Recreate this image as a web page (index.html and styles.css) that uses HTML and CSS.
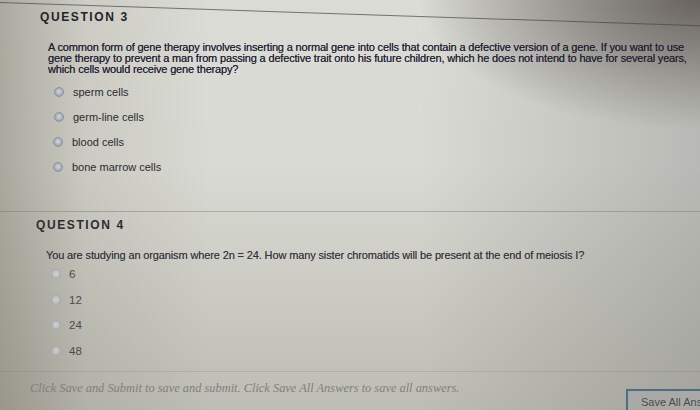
FILE: index.html
```html
<!DOCTYPE html>
<html>
<head>
<meta charset="utf-8">
<link rel="stylesheet" href="styles.css">
</head>
<body>
<div class="screen">
  <div class="topline"></div>
  <section class="q q3">
    <h2 class="qtitle">QUESTION 3</h2>
    <p class="qtext">A common form of gene therapy involves inserting a normal gene into cells that contain a defective version of a gene. If you want to use<br>gene therapy to prevent a man from passing a defective trait onto his future children, which he does not intend to have for several years,<br>which cells would receive gene therapy?</p>
    <ul class="opts">
      <li class="opt"><span class="radio"></span><span>sperm cells</span></li>
      <li class="opt"><span class="radio"></span><span>germ-line cells</span></li>
      <li class="opt"><span class="radio"></span><span>blood cells</span></li>
      <li class="opt"><span class="radio"></span><span>bone marrow cells</span></li>
    </ul>
  </section>
  <div class="divider"></div>
  <section class="q q4">
    <h2 class="qtitle">QUESTION 4</h2>
    <p class="qtext">You are studying an organism where 2n = 24. How many sister chromatids will be present at the end of meiosis I?</p>
    <ul class="opts">
      <li class="opt"><span class="radio"></span><span>6</span></li>
      <li class="opt"><span class="radio"></span><span>12</span></li>
      <li class="opt"><span class="radio"></span><span>24</span></li>
      <li class="opt"><span class="radio"></span><span>48</span></li>
    </ul>
  </section>
  <div class="divider lower"></div>
  <footer class="foot">
    <p class="note">Click Save and Submit to save and submit. Click Save All Answers to save all answers.</p>
    <button class="save">Save All Ans</button>
  </footer>
</div>
</body>
</html>
```

FILE: styles.css
```css
html, body {
  margin: 0;
  padding: 0;
}
body {
  width: 700px;
  height: 410px;
  overflow: hidden;
  font-family: "Liberation Sans", Arial, sans-serif;
  background-color: #d9dad3;
  background-image:
    radial-gradient(ellipse 280px 130px at 100% 0%, rgba(70, 62, 58, 0.7), rgba(70, 62, 58, 0) 100%),
    linear-gradient(to right, rgba(95, 88, 72, 0.38) 0%, rgba(95, 88, 72, 0.12) 12%, rgba(0, 0, 0, 0) 30%, rgba(0, 0, 0, 0) 60%, rgba(70, 70, 72, 0.22) 100%),
    linear-gradient(to bottom, rgba(255, 255, 255, 0.05) 0%, rgba(0, 0, 0, 0) 40%, rgba(90, 85, 70, 0.22) 100%);
}
.screen {
  width: 700px;
  height: 410px;
  display: flex;
  flex-direction: column;
  overflow: hidden;
}
.screen > * {
  flex: none;
}
.topline {
  margin-top: 2px;
  height: 1px;
  width: 720px;
  background: rgba(70, 70, 70, 0.7);
  transform: rotate(1.9deg);
  transform-origin: 0 0;
}
.q {
  display: flex;
  flex-direction: column;
}
.qtitle {
  margin: 0;
  font-size: 12px;
  font-weight: bold;
  letter-spacing: 1.6px;
  color: #222428;
  line-height: 14px;
}
.qtext {
  margin: 0;
  font-size: 11px;
  letter-spacing: -0.17px;
  line-height: 11px;
  color: #1f2233;
  white-space: nowrap;
  text-shadow: 0 0 0.5px rgba(20, 20, 40, 0.7);
}
.opts {
  list-style: none;
  margin: 0;
  padding: 0;
}
.opt {
  display: flex;
  align-items: center;
  font-size: 11px;
  color: #2a2b30;
}
.radio {
  width: 10px;
  height: 10px;
  border-radius: 50%;
  box-sizing: border-box;
  border: 1px solid #8d939c;
  background: radial-gradient(circle at 50% 45%, #d4d8de 0%, #a6adb7 60%, #8c939d 100%);
  flex: none;
}

/* Question 3 */
.q3 {
  padding-left: 40px;
  margin-top: 7px;
}
.q3 .qtext {
  margin: 18px 0 0 8px;
}
.q3 .opts {
  margin: 4px 0 0 14px;
}
.q3 .opt {
  height: 25px;
}
.q3 .opt .radio {
  margin-right: 9px;
}
.q3 .opt:nth-child(3),
.q3 .opt:nth-child(4) {
  margin-left: -1px;
}

/* divider */
.divider {
  margin-top: 32px;
  height: 1px;
  background: rgba(120, 120, 115, 0.45);
}
.divider.lower {
  margin-top: 7px;
  background: rgba(120, 120, 115, 0.25);
}

/* Question 4 */
.q4 {
  padding-left: 36px;
  margin-top: 6px;
}
.q4 .qtitle {
  color: #2c2d31;
}
.q4 .qtext {
  margin: 18px 0 0 10px;
  letter-spacing: -0.13px;
  color: #33343c;
  text-shadow: 0 0 0.3px rgba(40, 40, 50, 0.5);
}
.q4 .opts {
  margin: 0 0 0 15px;
}
.q4 .opt {
  height: 25.7px;
  color: #4a4b52;
  font-size: 11.5px;
}
.q4 .opt .radio {
  margin-right: 8px;
  border-color: rgba(150, 155, 160, 0.55);
  background: radial-gradient(circle at 50% 45%, rgba(220, 222, 226, 0.7) 0%, rgba(170, 175, 182, 0.55) 100%);
}

/* footer */
.foot {
  display: flex;
  align-items: flex-start;
  justify-content: space-between;
  padding-left: 30px;
  margin-top: 9px;
}
.note {
  margin: 0;
  font-family: "Liberation Serif", "Times New Roman", serif;
  font-style: italic;
  font-size: 12.4px;
  line-height: 14px;
  color: #7f7f7c;
}
.save {
  margin-top: 8px;
  width: 74px;
  height: 24px;
  flex: none;
  box-sizing: border-box;
  border: 2px solid #4d6c86;
  border-right: none;
  background: #a9aaa6;
  color: #4a4c52;
  font-family: "Liberation Sans", Arial, sans-serif;
  font-size: 11px;
  text-align: left;
  padding: 3px 0 0 13px;
  white-space: nowrap;
  overflow: hidden;
}
```
